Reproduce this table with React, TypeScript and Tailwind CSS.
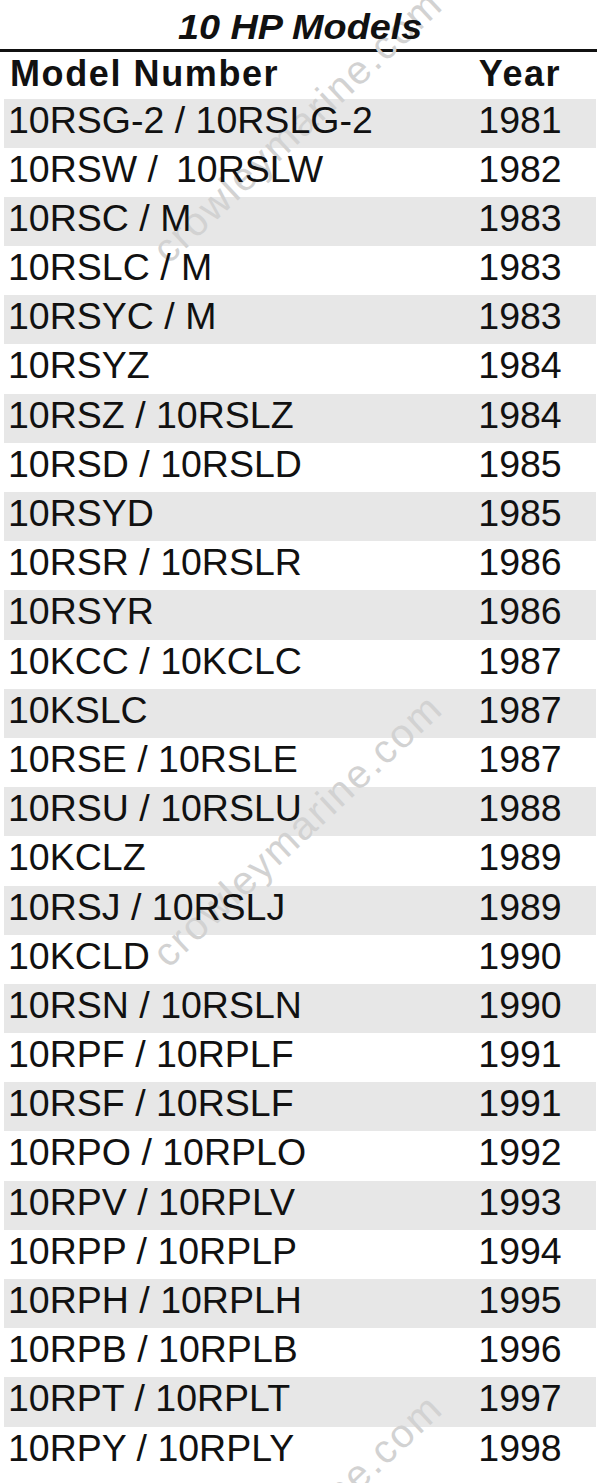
const models: [string, string][] = [
  ["10RSG-2 / 10RSLG-2", "1981"],
  ["10RSW / \u200910RSLW", "1982"],
  ["10RSC / M", "1983"],
  ["10RSLC / M", "1983"],
  ["10RSYC / M", "1983"],
  ["10RSYZ", "1984"],
  ["10RSZ / 10RSLZ", "1984"],
  ["10RSD / 10RSLD", "1985"],
  ["10RSYD", "1985"],
  ["10RSR / 10RSLR", "1986"],
  ["10RSYR", "1986"],
  ["10KCC / 10KCLC", "1987"],
  ["10KSLC", "1987"],
  ["10RSE / 10RSLE", "1987"],
  ["10RSU / 10RSLU", "1988"],
  ["10KCLZ", "1989"],
  ["10RSJ / 10RSLJ", "1989"],
  ["10KCLD", "1990"],
  ["10RSN / 10RSLN", "1990"],
  ["10RPF / 10RPLF", "1991"],
  ["10RSF / 10RSLF", "1991"],
  ["10RPO / 10RPLO", "1992"],
  ["10RPV / 10RPLV", "1993"],
  ["10RPP / 10RPLP", "1994"],
  ["10RPH / 10RPLH", "1995"],
  ["10RPB / 10RPLB", "1996"],
  ["10RPT / 10RPLT", "1997"],
  ["10RPY / 10RPLY", "1998"],
]

function Watermark({ top }: { top: string }) {
  return (
    <span
      className={`absolute left-[297px] ${top} -translate-x-1/2 -translate-y-1/2 -rotate-[43deg] whitespace-nowrap text-[40px] leading-none tracking-[2px] text-[#d2d2d2] pointer-events-none`}
    >
      crowleymarine.com
    </span>
  )
}

export default function App() {
  return (
    <div className="relative w-[600px] h-[1483px] overflow-hidden bg-white font-['Liberation_Sans',Arial,sans-serif] text-[#111]">
      {/* watermarks sit under the text but over the row shading */}
      <Watermark top="top-[126px]" />
      <Watermark top="top-[830px]" />
      <Watermark top="top-[1530px]" />

      {/* Title */}
      <div className="h-[49px] pt-[5px] text-center">
        <span className="relative z-10 inline-block scale-x-[1.08] text-[35px] leading-[44px] font-bold italic">
          10 HP Models
        </span>
      </div>
      <div className="w-[597px] h-[3px] bg-[#111]" />

      {/* Header */}
      <div className="ml-[4px] w-[592px] h-[46.5px] flex items-start text-[36px] leading-[43px] font-bold tracking-[1.6px]">
        <span className="relative z-10 flex-1 pl-[6px]">Model Number</span>
        <span className="relative z-10 w-[160px] -mr-[4px] text-center">Year</span>
      </div>

      {/* Rows */}
      <div className="flex flex-col">
        {models.map(([model, year], i) => (
          <div
            key={model}
            className={`ml-[4px] w-[592px] h-[49.2px] flex items-start text-[37.5px] leading-[43px] ${
              i % 2 === 0 ? "bg-[#e7e7e7]" : "bg-white"
            }`}
          >
            <span className="relative z-10 flex-1 pl-[4px] whitespace-nowrap">{model}</span>
            <span className="relative z-10 w-[160px] -mr-[4px] text-center">{year}</span>
          </div>
        ))}
      </div>
    </div>
  )
}
